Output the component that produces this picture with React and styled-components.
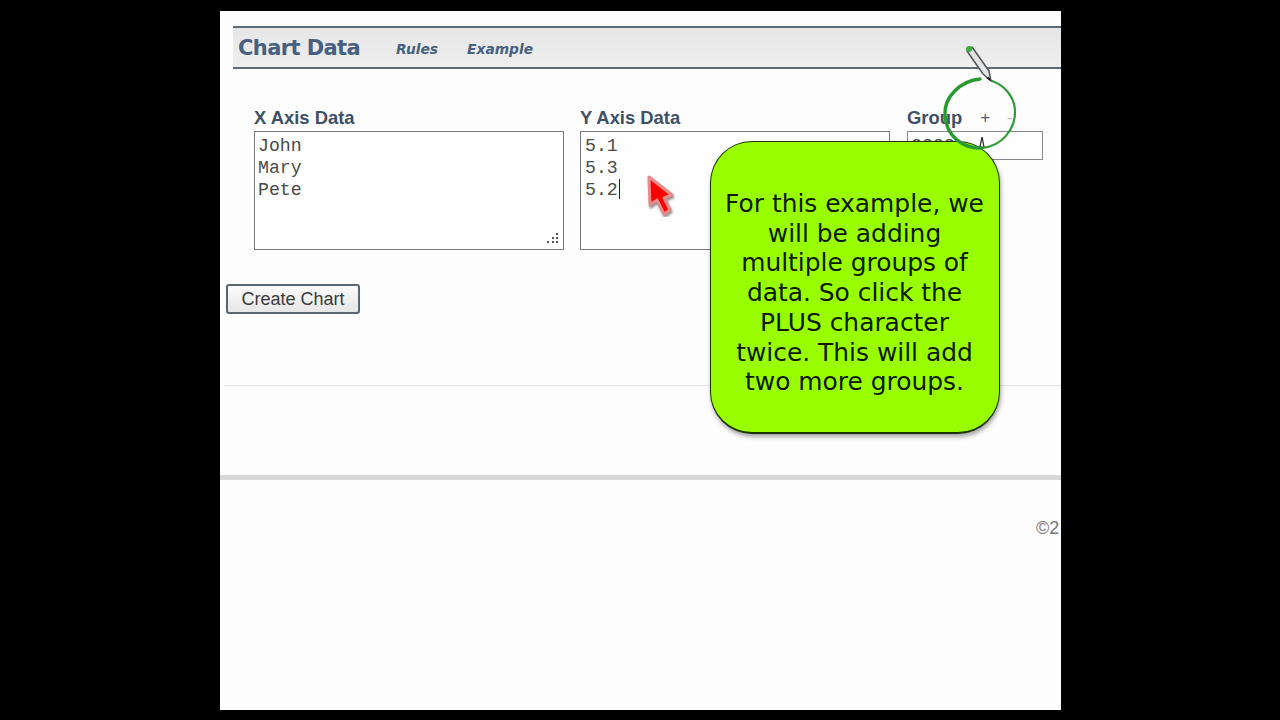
import React from "react";
import styled, { createGlobalStyle } from "styled-components";

const GlobalStyle = createGlobalStyle`
  html, body {
    margin: 0;
    height: 720px;
    overflow: hidden;
    background: #000;
  }
`;

const Page = styled.div`
  position: relative;
  box-sizing: border-box;
  width: 841px;
  height: 699px;
  margin: 11px 0 0 220px;
  padding-top: 15px;
  overflow: hidden;
  background: #fdfdfd;
`;

const Header = styled.div`
  box-sizing: border-box;
  height: 43px;
  margin-left: 13px;
  padding-left: 5px;
  display: flex;
  align-items: center;
  background: linear-gradient(#e6e6e6, #eeeeee);
  border-top: 2px solid #5f6a72;
  border-bottom: 2px solid #5f6a72;
`;

const Title = styled.h2`
  margin: 0 36px 0 0;
  font: bold 21px "DejaVu Sans", sans-serif;
  letter-spacing: -0.6px;
  color: #47607f;
`;

const HeaderLink = styled.a`
  margin-right: 29px;
  padding-top: 3px;
  font: italic bold 13.8px "DejaVu Sans", sans-serif;
  color: #46607f;
`;

const Fields = styled.div`
  display: flex;
  margin-top: 38px;
  padding-left: 34px;
`;

const Field = styled.div`
  width: ${(p) => p.$width}px;
  margin-right: ${(p) => p.$gap || 0}px;
`;

const LabelRow = styled.div`
  box-sizing: border-box;
  display: flex;
  height: 24px;
  padding-bottom: 2px;
  align-items: center;
`;

const Label = styled.label`
  font: bold 18.4px "Liberation Sans", sans-serif;
  color: #3d5068;
`;

const GroupAction = styled.span`
  margin-left: ${(p) => p.$left}px;
  font: 17px "Liberation Sans", sans-serif;
  color: ${(p) => p.$color};
`;

const DataBox = styled.div`
  position: relative;
  box-sizing: border-box;
  height: 119px;
  padding: 3px ${(p) => p.$inset || 3}px;
  border: 1px solid #77797c;
  background: #fefefe;
  font: 18.2px/22px "Liberation Mono", monospace;
  color: #4a4a4a;
`;

const DataLine = styled.div`
  height: 22px;
`;

const Caret = styled.span`
  display: inline-block;
  width: 1px;
  height: 20px;
  margin-left: 1px;
  vertical-align: -4px;
  background: #222;
`;

const Grip = styled.svg`
  position: absolute;
  right: 3px;
  bottom: 3px;
`;

const GroupBox = styled.div`
  box-sizing: border-box;
  height: 29px;
  padding: 3px 3px;
  overflow: hidden;
  border: 1px solid #86888a;
  background: #fefefe;
  font: 18.2px/22px "Liberation Mono", monospace;
  color: #4a4a4a;
`;

const CreateButton = styled.button`
  display: block;
  box-sizing: border-box;
  width: 134px;
  height: 30px;
  margin: 34px 0 0 6px;
  padding: 0;
  border: 2px solid #5b6670;
  border-radius: 3px;
  background: linear-gradient(#fbfbfb, #e6e6e6);
  font: 18px "Liberation Sans", sans-serif;
  color: #3a3a3a;
`;

const ThinRule = styled.div`
  height: 1px;
  margin: 71px 0 0 5px;
  background: #e2e2e2;
`;

const ThickRule = styled.div`
  height: 5px;
  margin-top: 89px;
  background: #d8d8d8;
`;

const Copyright = styled.div`
  margin-top: 38px;
  padding-left: 816px;
  white-space: nowrap;
  font: 18px "Liberation Sans", sans-serif;
  color: #777;
`;

const Callout = styled.div`
  position: absolute;
  left: 490px;
  top: 130px;
  box-sizing: border-box;
  width: 290px;
  height: 293px;
  padding: 47px 1px 0 0;
  border: 1px solid #1c3300;
  border-bottom-width: 2px;
  border-radius: 42px;
  background: #99ff00;
  box-shadow: 1px 3px 4px rgba(0, 0, 0, 0.35);
  font: 24.9px/29.7px "DejaVu Sans", sans-serif;
  text-align: center;
  color: #0b1a00;
`;

const Annotation = styled.svg`
  position: absolute;
  left: 700px;
  top: 20px;
`;

const Pointer = styled.svg`
  position: absolute;
  left: 425px;
  top: 162px;
`;

export default function App() {
  return (
    <>
      <GlobalStyle />
      <Page>
        <Header>
          <Title>Chart Data</Title>
          <HeaderLink>Rules</HeaderLink>
          <HeaderLink>Example</HeaderLink>
        </Header>
        <Fields>
          <Field $width={310} $gap={16}>
            <LabelRow>
              <Label>X Axis Data</Label>
            </LabelRow>
            <DataBox>
              <DataLine>John</DataLine>
              <DataLine>Mary</DataLine>
              <DataLine>Pete</DataLine>
              <Grip width="16" height="16" viewBox="0 0 16 16">
                <g fill="#555">
                  <rect x="12" y="3" width="2" height="2" />
                  <rect x="8" y="7" width="2" height="2" />
                  <rect x="12" y="7" width="2" height="2" />
                  <rect x="3" y="11" width="2" height="2" />
                  <rect x="8" y="11" width="2" height="2" />
                  <rect x="12" y="11" width="2" height="2" />
                </g>
              </Grip>
            </DataBox>
          </Field>
          <Field $width={310} $gap={17}>
            <LabelRow>
              <Label>Y Axis Data</Label>
            </LabelRow>
            <DataBox $inset={4}>
              <DataLine>5.1</DataLine>
              <DataLine>5.3</DataLine>
              <DataLine>5.2<Caret /></DataLine>
            </DataBox>
          </Field>
          <Field $width={136}>
            <LabelRow>
              <Label>Group</Label>
              <GroupAction $left={18} $color="#4a5f7a">+</GroupAction>
              <GroupAction $left={17} $color="#b9c2cc">-</GroupAction>
            </LabelRow>
            <GroupBox>2222</GroupBox>
          </Field>
        </Fields>
        <CreateButton>Create Chart</CreateButton>
        <ThinRule />
        <ThickRule />
        <Copyright>©2</Copyright>
        <Pointer width="30" height="44" viewBox="0 0 30 44">
          <path d="M4 4 L5 32 L12 27 L19 41 L25 37 L19 25 L27 22 Z" fill="#ff0000" stroke="#e98a8a" strokeWidth="3" strokeLinejoin="round" style={{ filter: "drop-shadow(1px 2px 1px rgba(0,0,0,.45))" }} />
        </Pointer>
        <Callout>
          For this example, we
          <br />
          will be adding
          <br />
          multiple groups of
          <br />
          data. So click the
          <br />
          PLUS character
          <br />
          twice. This will add
          <br />
          two more groups.
        </Callout>
        <Annotation width="110" height="125" viewBox="0 0 110 125">
          <path d="M60 48 C40 50 24 66 25 84 C26 106 44 118 62 117" fill="none" stroke="#2a9a35" strokeWidth="3.5" strokeLinecap="round" />
          <path d="M62 117 C82 115 96 98 95 79 C94 65 84 54 72 50" fill="none" stroke="#2f9a3a" strokeWidth="2.2" strokeLinecap="round" />
          <path d="M47 20 L52 16 L69 40 L71 50 L63 43 Z" fill="#e4e4e4" stroke="#555" strokeWidth="1.5" strokeLinejoin="round" />
          <path d="M69 46 L71 50 L66 47 Z" fill="#111" />
          <circle cx="49" cy="18" r="3" fill="#3cae3c" />
          <path d="M60 116 L62 106 L64 116" fill="none" stroke="#222" strokeWidth="1.2" />
        </Annotation>
      </Page>
    </>
  );
}
